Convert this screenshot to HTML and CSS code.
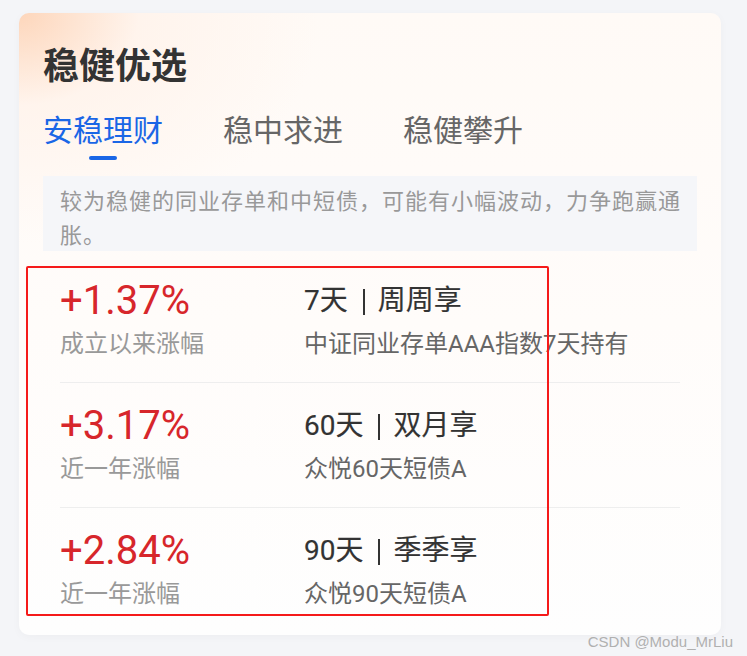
FILE: index.html
```html
<!DOCTYPE html>
<html lang="zh-CN">
<head>
<meta charset="utf-8">
<title>稳健优选</title>
<link rel="stylesheet" href="styles.css">
</head>
<body>
  <div class="card">
    <div class="title">稳健优选</div>
    <div class="tabs">
      <div class="tab active">安稳理财<span class="bar"></span></div>
      <div class="tab">稳中求进</div>
      <div class="tab">稳健攀升</div>
    </div>
    <div class="desc">较为稳健的同业存单和中短债，可能有小幅波动，力争跑赢通胀。</div>
    <div class="list">
      <div class="row">
        <div class="col-left">
          <div class="pct">+1.37%</div>
          <div class="label">成立以来涨幅</div>
        </div>
        <div class="col-right">
          <div class="name">7天<span class="sep" aria-label="|"></span>周周享</div>
          <div class="sub">中证同业存单AAA指数7天持有</div>
        </div>
      </div>
      <div class="row">
        <div class="col-left">
          <div class="pct">+3.17%</div>
          <div class="label">近一年涨幅</div>
        </div>
        <div class="col-right">
          <div class="name">60天<span class="sep" aria-label="|"></span>双月享</div>
          <div class="sub">众悦60天短债A</div>
        </div>
      </div>
      <div class="row">
        <div class="col-left">
          <div class="pct">+2.84%</div>
          <div class="label">近一年涨幅</div>
        </div>
        <div class="col-right">
          <div class="name">90天<span class="sep" aria-label="|"></span>季季享</div>
          <div class="sub">众悦90天短债A</div>
        </div>
      </div>
    </div>
  </div>
  <div class="highlight"></div>
  <div class="watermark">CSDN @Modu_MrLiu</div>
</body>
</html>
```

FILE: styles.css
```css
html, body {
  margin: 0;
  padding: 0;
}
body {
  width: 747px;
  height: 656px;
  overflow: hidden;
  background: #f4f5f8;
  font-family: Roboto, "Noto Sans CJK SC", sans-serif;
  position: relative;
}
.card {
  box-sizing: border-box;
  margin: 13px 0 0 19px;
  width: 702px;
  height: 622px;
  padding: 26px 24px 0 24px;
  border-radius: 10px;
  background:
    radial-gradient(ellipse 300px 230px at 0 0, #fdd6bb 0%, rgba(255, 240, 230, 0.6) 40%, rgba(255, 250, 246, 0) 100%),
    linear-gradient(180deg, #fffaf6 0%, #fffcfa 50%, #fefefe 100%);
  box-shadow: 0 2px 10px rgba(0, 0, 0, 0.03);
}
.title {
  font-family: "Noto Sans CJK SC", sans-serif;
  font-size: 36px;
  line-height: 48px;
  font-weight: 600;
  color: #333;
}
.tabs {
  display: flex;
  gap: 60px;
  margin-top: 21px;
}
.tab {
  position: relative;
  font-family: "Noto Sans CJK SC", sans-serif;
  font-size: 30px;
  line-height: 40px;
  color: #666;
  width: 120px;
  padding-bottom: 12px;
}
.tab.active {
  color: #1a66e6;
}
.tab .bar {
  position: absolute;
  left: 46px;
  bottom: 0;
  width: 28px;
  height: 4px;
  border-radius: 2px;
  background: #1a66e6;
}
.desc {
  margin-top: 16px;
  background: #f5f6f9;
  padding: 6px 16px 1px 17px;
  font-family: "Noto Sans CJK SC", sans-serif;
  font-size: 22px;
  letter-spacing: 1px;
  line-height: 34px;
  color: #999;
}
.list {
  margin-top: 7px;
  padding: 0 17px;
}
.row {
  display: flex;
  padding: 21px 0 21px;
  border-bottom: 1px solid #eeeeee;
}
.row:last-child {
  border-bottom: none;
}
.col-left {
  width: 244px;
}
.pct {
  font-size: 40px;
  line-height: 44px;
  color: #d7262b;
}
.label, .sub {
  font-size: 24px;
  line-height: 34px;
  margin-top: 4px;
  color: #999;
}
.sub {
  color: #666;
}
.name {
  display: flex;
  align-items: center;
  font-size: 28px;
  line-height: 44px;
  font-weight: 400;
  color: #333;
  -webkit-text-stroke: 0.15px #333;
}
.sep {
  display: inline-block;
  width: 2px;
  height: 26px;
  margin: 2px 13px 0 15px;
  background: #333;
}
.highlight {
  position: absolute;
  left: 26px;
  top: 266px;
  width: 519px;
  height: 346px;
  border: 2px solid #f51a1a;
  border-radius: 2px;
}
.watermark {
  position: absolute;
  right: 14px;
  top: 633px;
  font-family: "Liberation Sans", Arial, sans-serif;
  font-size: 15px;
  line-height: 18px;
  color: #b0b0b0;
}
```
